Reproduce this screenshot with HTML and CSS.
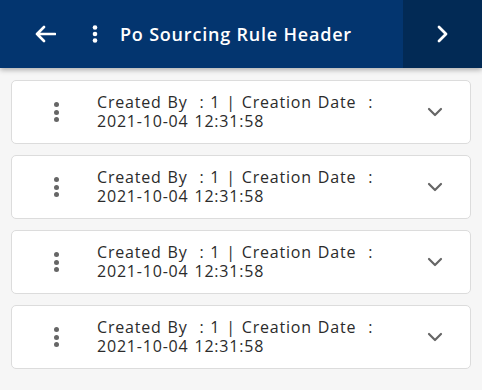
FILE: index.html
```html
<!DOCTYPE html>
<html>
<head>
<meta charset="utf-8">
<link rel="stylesheet" href="styles.css">
</head>
<body>
<div class="app">
  <header class="bar">
    <button class="icon-btn back" aria-label="Back">
      <svg width="22" height="18" viewBox="0 0 22 18"><path d="M10 2 L3 9 L10 16 M3 9 H21" fill="none" stroke="#fff" stroke-width="2.6" stroke-linecap="round" stroke-linejoin="round"/></svg>
    </button>
    <button class="icon-btn menu" aria-label="Menu">
      <svg width="6" height="18" viewBox="0 0 6 18"><circle cx="3" cy="2.5" r="2.3" fill="#fff"/><circle cx="3" cy="9" r="2.3" fill="#fff"/><circle cx="3" cy="15.5" r="2.3" fill="#fff"/></svg>
    </button>
    <h1 class="title">Po Sourcing Rule Header</h1>
    <button class="next" aria-label="Next">
      <svg width="14" height="18" viewBox="0 0 14 18"><path d="M3 2 L10 9 L3 16" fill="none" stroke="#fff" stroke-width="2.8" stroke-linecap="round" stroke-linejoin="round"/></svg>
    </button>
  </header>
  <main class="list">
    <div class="card">
      <div class="kebab"><span></span><span></span><span></span></div>
      <div class="text"><div class="line">Created By &nbsp;: 1 | Creation Date &nbsp;:</div><div class="line">2021-10-04 12:31:58</div></div>
      <svg class="chev" width="16" height="10" viewBox="0 0 16 10"><path d="M2 2 L8 8 L14 2" fill="none" stroke="#666" stroke-width="2.2" stroke-linecap="round" stroke-linejoin="round"/></svg>
    </div>
    <div class="card">
      <div class="kebab"><span></span><span></span><span></span></div>
      <div class="text"><div class="line">Created By &nbsp;: 1 | Creation Date &nbsp;:</div><div class="line">2021-10-04 12:31:58</div></div>
      <svg class="chev" width="16" height="10" viewBox="0 0 16 10"><path d="M2 2 L8 8 L14 2" fill="none" stroke="#666" stroke-width="2.2" stroke-linecap="round" stroke-linejoin="round"/></svg>
    </div>
    <div class="card">
      <div class="kebab"><span></span><span></span><span></span></div>
      <div class="text"><div class="line">Created By &nbsp;: 1 | Creation Date &nbsp;:</div><div class="line">2021-10-04 12:31:58</div></div>
      <svg class="chev" width="16" height="10" viewBox="0 0 16 10"><path d="M2 2 L8 8 L14 2" fill="none" stroke="#666" stroke-width="2.2" stroke-linecap="round" stroke-linejoin="round"/></svg>
    </div>
    <div class="card">
      <div class="kebab"><span></span><span></span><span></span></div>
      <div class="text"><div class="line">Created By &nbsp;: 1 | Creation Date &nbsp;:</div><div class="line">2021-10-04 12:31:58</div></div>
      <svg class="chev" width="16" height="10" viewBox="0 0 16 10"><path d="M2 2 L8 8 L14 2" fill="none" stroke="#666" stroke-width="2.2" stroke-linecap="round" stroke-linejoin="round"/></svg>
    </div>
  </main>
</div>
</body>
</html>
```
FILE: styles.css
```css
* { box-sizing: border-box; }
html, body { margin: 0; padding: 0; }
body {
  background: #f6f6f6;
  font-family: "Open Sans", "Liberation Sans", sans-serif;
  width: 482px;
  height: 390px;
  overflow: hidden;
}
.bar {
  height: 68px;
  background: #03356f;
  display: flex;
  align-items: center;
  box-shadow: 0 2px 5px rgba(0,0,0,0.3);
  position: relative;
  z-index: 1;
}
.icon-btn {
  background: none;
  border: 0;
  padding: 0;
  display: flex;
  align-items: center;
  justify-content: center;
}
.back { width: 22px; margin-left: 34px; }
.menu { width: 6px; margin-left: 36px; }
.title {
  margin: 0 0 0 22px;
  flex: 1;
  color: #fff;
  font-size: 18px;
  font-weight: 600;
  letter-spacing: 0.8px;
}
.next {
  width: 79px;
  height: 68px;
  background: #022a55;
  border: 0;
  display: flex;
  align-items: center;
  justify-content: center;
  padding: 0;
}
.list {
  padding: 12px 11px 0 11px;
  display: flex;
  flex-direction: column;
  gap: 11px;
}
.card {
  height: 64px;
  background: #fff;
  border: 1px solid #dcdcdc;
  border-radius: 5px;
  display: flex;
  align-items: center;
}
.kebab {
  width: 5px;
  margin-left: 42px;
  display: flex;
  flex-direction: column;
  gap: 2.5px;
}
.kebab span {
  width: 5px; height: 5px; border-radius: 50%;
  background: #666;
}
.text {
  margin-left: 38px;
  flex: 1;
  font-size: 16px;
  color: #2b2b2b;
  letter-spacing: 0.8px;
  word-spacing: 1px;
}
.line {
  height: 19px;
  line-height: 19px;
  white-space: nowrap;
}
.chev { margin-right: 27px; }
```
